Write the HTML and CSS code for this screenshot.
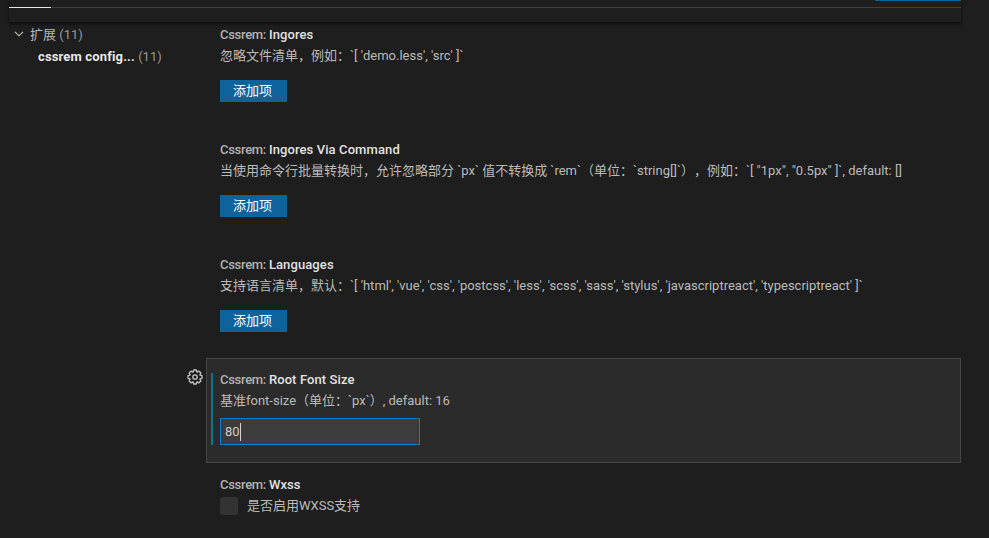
FILE: index.html
```html
<!DOCTYPE html>
<html lang="zh-CN">
<head>
  <meta charset="UTF-8">
  <title>Settings</title>
  <link rel="stylesheet" href="styles.css">
</head>
<body>
  <!-- tab strip with its shadow -->
  <header class="top">
    <div class="tab-active"></div>
    <div class="tab-rest"><div class="tab-mark"></div></div>
  </header>

  <main class="layout">
    <!-- settings tree -->
    <nav class="tree">
      <div class="tree-group">
        <svg class="chevron" viewBox="0 0 10 6" width="10" height="6"><path d="M1 .8 5 4.8 9 .8" /></svg>
        <span>扩展</span> <span class="count">(11)</span>
      </div>
      <div class="tree-item"><b>cssrem config...</b> <span class="count">(11)</span></div>
    </nav>

    <!-- settings list -->
    <section class="settings">
      <div class="row row-first">
        <div class="title">Cssrem: <b>Ingores</b></div>
        <div class="desc">忽略文件清单，例如：`[ 'demo.less', 'src' ]`</div>
        <button class="add-btn">添加项</button>
      </div>
      <div class="row">
        <div class="title">Cssrem: <b>Ingores Via Command</b></div>
        <div class="desc">当使用命令行批量转换时，允许忽略部分 `px` 值不转换成 `rem`（单位：`string[]`），例如：`[ "1px", "0.5px" ]`, default: []</div>
        <button class="add-btn">添加项</button>
      </div>
      <div class="row">
        <div class="title">Cssrem: <b>Languages</b></div>
        <div class="desc">支持语言清单，默认：`[ 'html', 'vue', 'css', 'postcss', 'less', 'scss', 'sass', 'stylus', 'javascriptreact', 'typescriptreact' ]`</div>
        <button class="add-btn">添加项</button>
      </div>
      <div class="row row-focus">
        <svg class="gear" viewBox="-8 -8 16 16" width="16" height="16">
          <path d="M-1.3-7H1.3L1.9-5 2.19-4.88 4.03-5.87 5.87-4.03 4.88-2.19 5-1.9 7-1.3V1.3L5 1.9 4.88 2.19 5.87 4.03 4.03 5.87 2.19 4.88 1.9 5 1.3 7H-1.3L-1.9 5-2.19 4.88-4.03 5.87-5.87 4.03-4.88 2.19-5 1.9-7 1.3V-1.3L-5-1.9-4.88-2.19-5.87-4.03-4.03-5.87-2.19-4.88-1.9-5Z" />
          <circle r="2.2" />
        </svg>
        <div class="title">Cssrem: <b>Root Font Size</b></div>
        <div class="desc">基准font-size（单位：`px`）, default: 16</div>
        <div class="num-input">80<span class="caret"></span></div>
      </div>
      <div class="row row-check">
        <div class="title">Cssrem: <b>Wxss</b></div>
        <label class="check-line"><span class="checkbox"></span>是否启用WXSS支持</label>
      </div>
    </section>
  </main>
</body>
</html>
```
FILE: styles.css
```css
/* Page */
html, body {
  margin: 0;
  height: 538px;
  overflow: hidden;
}

body {
  background-color: #1e1e1e;
  color: #cccccc;
  font-family: "Roboto", "Noto Sans CJK SC", sans-serif;
  font-size: 13px;
  line-height: 18px;
  text-spacing-trim: space-all;
}

/* Tab strip */
.top {
  position: relative;
  z-index: 1;
  display: flex;
  height: 22px;
  margin: 0 28px 0 9px;
  background-color: #1e1e1e;
  box-shadow: 0 2px 3px rgba(0, 0, 0, 0.55);
}

.tab-active {
  width: 42px;
  height: 7px;
  border-bottom: 1px solid #e7e7e7;
}

.tab-rest {
  flex: 1;
  display: flex;
  justify-content: flex-end;
  align-items: flex-start;
  height: 7px;
  border-bottom: 1px solid #3f3f3f;
}

.tab-mark {
  width: 86px;
  height: 1px;
  background-color: #0e639c;
}

/* Layout */
.layout {
  display: flex;
  margin-right: 28px;
}

/* Tree */
.tree {
  width: 206px;
  flex: none;
  padding-top: 4px;
}

.tree-group {
  position: relative;
  height: 18px;
  padding-left: 30px;
  color: #b8b8b8;
}

.chevron {
  position: absolute;
  left: 14px;
  top: 5px;
  fill: none;
  stroke: #c5c5c5;
  stroke-width: 1.1;
}

.tree-item {
  margin-top: 4px;
  height: 18px;
  padding-left: 38px;
  color: #e7e7e7;
}

.tree-item b {
  font-weight: 700;
  letter-spacing: 0.15px;
}

.count {
  color: #999999;
}

/* Settings list */
.settings {
  flex: 1;
}

.row {
  height: 115px;
  padding: 13px 14px 0;
  box-sizing: border-box;
}

.row-first {
  height: 106px;
  padding-top: 4px;
}

.title {
  color: #b3b3b3;
  font-weight: 500;
  white-space: nowrap;
  letter-spacing: -0.3px;
}

.title b {
  color: #e2e2e2;
  font-weight: 500;
  letter-spacing: 0.1px;
}

.desc {
  margin-top: 3px;
  color: #bbbbbb;
  white-space: nowrap;
}

.add-btn {
  display: block;
  width: 67px;
  height: 22px;
  margin-top: 15px;
  padding: 0 2px 0 0;
  border: none;
  background-color: #0e639c;
  color: #ffffff;
  font: inherit;
}

/* Focused row */
.row-focus {
  position: relative;
  height: 105px;
  border: 1px solid #454545;
  padding: 12px 13px 0;
  background-color: #2b2b2b;
}

.row-focus::before {
  content: "";
  position: absolute;
  left: 4px;
  top: 14px;
  width: 2px;
  height: 72px;
  background-color: #0e7490;
}

.gear {
  position: absolute;
  left: -20px;
  top: 10px;
  fill: none;
  stroke: #c5c5c5;
  stroke-width: 1.3;
  stroke-linejoin: round;
}

.num-input {
  display: flex;
  align-items: center;
  width: 200px;
  height: 27px;
  margin-top: 8px;
  padding-left: 4px;
  box-sizing: border-box;
  border: 1px solid #007fd4;
  background-color: #3c3c3c;
  color: #cccccc;
}

.caret {
  width: 1px;
  height: 18px;
  background-color: #d4d4d4;
}

/* Checkbox row */
.row-check {
  height: 75px;
}

.check-line {
  display: flex;
  align-items: center;
  gap: 9px;
  margin-top: 3px;
  color: #bbbbbb;
}

.checkbox {
  width: 18px;
  height: 18px;
  border-radius: 3px;
  background-color: #333333;
}
```
